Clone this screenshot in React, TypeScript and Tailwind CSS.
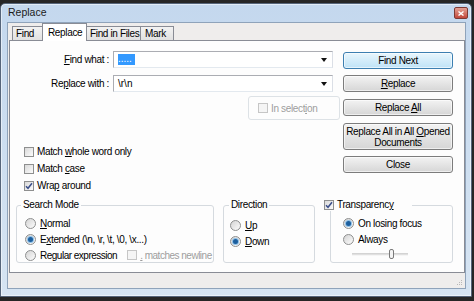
import React from "react";

function Check({ checked = false, disabled = false }: { checked?: boolean; disabled?: boolean }) {
  return (
    <span
      className={
        disabled
          ? "w-[10px] h-[10px] border border-[#c6c6c6] bg-[#f5f5f5] flex items-center justify-center shrink-0"
          : "w-[10px] h-[10px] border border-[#8e8f8f] bg-gradient-to-br from-[#d9d9d9] to-[#fcfcfc] flex items-center justify-center shrink-0"
      }
    >
      {checked && (
        <svg width="8" height="8" viewBox="0 0 8 8">
          <path d="M1 4.2 L3 6.3 L7 1.2" fill="none" stroke="#3b4f8a" strokeWidth="1.5" />
        </svg>
      )}
    </span>
  );
}

function Radio({ checked = false }: { checked?: boolean }) {
  return (
    <span className="w-[11px] h-[11px] rounded-full border border-[#8e8f8f] bg-gradient-to-br from-[#d4d4d4] to-[#fdfdfd] flex items-center justify-center shrink-0">
      {checked && (
        <span className="w-[5px] h-[5px] rounded-full bg-[#1d5f9e] shadow-[0_0_0_1px_#8ec0e8]" />
      )}
    </span>
  );
}

function U({ children }: { children: React.ReactNode }) {
  return <span className="underline underline-offset-[1px]">{children}</span>;
}

function Btn({
  children,
  primary = false,
  tall = false,
  mt,
}: {
  children: React.ReactNode;
  primary?: boolean;
  tall?: boolean;
  mt: string;
}) {
  const base = primary
    ? "border-[#3c7fb1] bg-gradient-to-b from-[#e8f6fd] to-[#bfe3f7]"
    : "border-[#7c7c7c] bg-gradient-to-b from-[#f3f3f3] to-[#d6d6d6]";
  return (
    <div
      className={`${mt} ${tall ? "h-[27px]" : "h-[17px]"} w-full rounded-[3px] border ${base} flex items-center justify-center text-center leading-[11px] shadow-[inset_0_0_0_1px_rgba(255,255,255,0.6)]`}
    >
      {children}
    </div>
  );
}

function Combo({ children }: { children: React.ReactNode }) {
  return (
    <div className="w-[220px] h-[17px] border border-[#abadb3] border-b-[#e3e9ef] border-r-[#dbdfe6] bg-white flex items-center pl-[3px]">
      <div className="flex-1 flex items-center">{children}</div>
      <svg width="6" height="4" viewBox="0 0 6 4" className="mr-[5px]">
        <path d="M0 0 L6 0 L3 4 Z" fill="#111" />
      </svg>
    </div>
  );
}

export default function App() {
  return (
    <div className="w-[474px] h-[301px] bg-[#262626] pt-[3px] pr-[2px] pb-[4px] overflow-hidden whitespace-nowrap font-['Liberation_Sans',Arial,sans-serif] text-[10px] tracking-[-0.35px] text-black">
      <div className="h-full flex flex-col border border-[#56657a] rounded-t-[5px] bg-gradient-to-b from-[#c4d8ee] to-[#d6e4f2] shadow-[inset_0_0_0_1px_rgba(255,255,255,0.5)]">
        {/* Title bar */}
        <div className="h-[18px] flex items-center pl-[7px] pr-[3px]">
          <span className="text-[10.5px] tracking-normal text-[#1b1b1b] flex-1">Replace</span>
          <div className="w-[14px] h-[12px] rounded-[2px] border border-[#7d3a34] bg-gradient-to-b from-[#e3a195] to-[#c2463b] flex items-center justify-center">
            <svg width="6" height="5" viewBox="0 0 6 5">
              <path d="M0.5 0.5 L5.5 4.5 M5.5 0.5 L0.5 4.5" stroke="#fff" strokeWidth="1.4" />
            </svg>
          </div>
        </div>

        {/* Client area */}
        <div className="flex-1 ml-[6px] mr-[5px] mb-[7px] border border-[#8fa3ba] bg-[#efedec] flex flex-col">
          {/* Tabs */}
          <div className="h-[17px] flex items-end pl-[4px]">
            <div className="h-[14px] w-[31px] border border-b-0 border-[#898c95] bg-gradient-to-b from-[#f3f3f3] to-[#e1e1e1] flex items-center pl-[3px]">
              Find
            </div>
            <div className="relative z-10 -mb-[1px] -ml-[1px] h-[18px] w-[45px] border border-b-0 border-[#898c95] bg-white flex items-center pl-[5px]">
              Replace
            </div>
            <div className="h-[14px] w-[55px] -ml-[1px] border border-b-0 border-[#898c95] bg-gradient-to-b from-[#f3f3f3] to-[#e1e1e1] flex items-center pl-[3px]">
              Find in Files
            </div>
            <div className="h-[14px] w-[34px] -ml-[1px] border border-b-0 border-[#898c95] bg-gradient-to-b from-[#f3f3f3] to-[#e1e1e1] flex items-center pl-[4px]">
              Mark
            </div>
          </div>

          {/* Panel */}
          <div className="h-[233px] ml-[1px] border border-[#898c95] bg-[#fdfdfd] flex flex-col">
            <div className="flex">
              {/* Left column */}
              <div className="flex-1 flex flex-col pt-[10px]">
                <div className="h-[17px] flex items-center">
                  <div className="w-[99px] text-right">
                    <U>F</U>ind what :
                  </div>
                  <div className="ml-[4px]">
                    <Combo>
                      <span className="ml-[1px] h-[11px] w-[17px] bg-[#3399ff] text-white leading-[9px] tracking-[0px]">
                        .....
                      </span>
                    </Combo>
                  </div>
                </div>
                <div className="mt-[7px] h-[17px] flex items-center">
                  <div className="w-[99px] text-right">
                    Re<U>p</U>lace with :
                  </div>
                  <div className="ml-[4px]">
                    <Combo>
                      <span className="ml-[1px] tracking-[0px]">\r\n</span>
                    </Combo>
                  </div>
                </div>
                <div className="mt-[4px] self-end mr-[3px] w-[92px] h-[24px] rounded-[3px] border border-[#dde2e6] flex items-center pl-[9px] gap-[3px] text-[#9d9d9d]">
                  <Check disabled />
                  <span>
                    In select<U>i</U>on
                  </span>
                </div>
                <div className="mt-[23px] pl-[14px] flex flex-col">
                  <div className="h-[17px] flex items-center gap-[3px]">
                    <Check />
                    <span>
                      Match <U>w</U>hole word only
                    </span>
                  </div>
                  <div className="h-[17px] flex items-center gap-[3px]">
                    <Check />
                    <span>
                      Match <U>c</U>ase
                    </span>
                  </div>
                  <div className="h-[17px] flex items-center gap-[3px]">
                    <Check checked />
                    <span>
                      Wra<U>p</U> around
                    </span>
                  </div>
                </div>
              </div>

              {/* Right column - buttons */}
              <div className="w-[110px] mr-[11px] flex flex-col">
                <Btn mt="mt-[11px]" primary>
                  Find Next
                </Btn>
                <Btn mt="mt-[6px]">
                  <span>
                    <U>R</U>eplace
                  </span>
                </Btn>
                <Btn mt="mt-[7px]">
                  <span>
                    Replace <U>A</U>ll
                  </span>
                </Btn>
                <Btn mt="mt-[7px]" tall>
                  <span>
                    Replace All in All <U>O</U>pened
                    <br />
                    Documents
                  </span>
                </Btn>
                <Btn mt="mt-[6px]">Close</Btn>
              </div>
            </div>

            {/* Group boxes */}
            <div className="mt-[11px] pl-[6px] flex">
              {/* Search mode */}
              <div className="relative w-[198px] h-[58px] rounded-[3px] border border-[#d5dadf] pt-[9px] pl-[8px]">
                <span className="absolute -top-[7px] left-[4px] bg-[#fdfdfd] px-[2px] leading-[12px]">
                  Search Mode
                </span>
                <div className="h-[16px] flex items-center gap-[4px]">
                  <Radio />
                  <span>
                    <U>N</U>ormal
                  </span>
                </div>
                <div className="h-[16px] flex items-center gap-[4px]">
                  <Radio checked />
                  <span>
                    E<U>x</U>tended (\n, \r, \t, \0, \x...)
                  </span>
                </div>
                <div className="h-[16px] flex items-center gap-[4px] tracking-[-0.5px]">
                  <Radio />
                  <span>Regular expression</span>
                  <span className="ml-[6px] flex items-center gap-[3px] text-[#9d9d9d]">
                    <Check disabled />
                    <span>
                      <U>.</U> matches newline
                    </span>
                  </span>
                </div>
              </div>

              {/* Direction */}
              <div className="relative ml-[9px] w-[92px] h-[58px] rounded-[3px] border border-[#d5dadf] pt-[11px] pl-[6px]">
                <span className="absolute -top-[7px] left-[5px] bg-[#fdfdfd] px-[2px] leading-[12px]">
                  Direction
                </span>
                <div className="h-[16px] flex items-center gap-[4px]">
                  <Radio />
                  <span>
                    <U>U</U>p
                  </span>
                </div>
                <div className="h-[16px] flex items-center gap-[4px]">
                  <Radio checked />
                  <span>
                    <U>D</U>own
                  </span>
                </div>
              </div>

              {/* Transparency */}
              <div className="relative ml-[15px] w-[123px] h-[58px] rounded-[3px] border border-[#d5dadf] pt-[9px] pl-[12px]">
                <span className="absolute -top-[7px] -left-[7px] bg-[#fdfdfd] pr-[18px] leading-[12px] flex items-center gap-[3px]">
                  <Check checked />
                  <span>
                    Transparenc<U>y</U>
                  </span>
                </span>
                <div className="h-[16px] flex items-center gap-[4px]">
                  <Radio checked />
                  <span>On losing focus</span>
                </div>
                <div className="h-[16px] flex items-center gap-[4px]">
                  <Radio />
                  <span>Always</span>
                </div>
                <div className="h-[14px] ml-[9px] w-[56px] flex items-center">
                  <svg width="56" height="12" viewBox="0 0 56 12">
                    <line x1="0" y1="6" x2="56" y2="6" stroke="#a8a8a8" strokeWidth="1" />
                    <line x1="0" y1="7" x2="56" y2="7" stroke="#eeeeee" strokeWidth="1" />
                    <rect x="37.5" y="1.5" width="4" height="9" rx="1.5" fill="#f4f4f4" stroke="#7a7a7a" />
                  </svg>
                </div>
              </div>
            </div>
          </div>
          <div className="flex-1 flex items-end justify-end pr-[2px] pb-[2px]">
            <svg width="8" height="8" viewBox="0 0 8 8">
              <rect x="6" y="2" width="1" height="1" fill="#b8b8b8" />
              <rect x="4" y="4" width="1" height="1" fill="#b8b8b8" />
              <rect x="6" y="4" width="1" height="1" fill="#b8b8b8" />
              <rect x="2" y="6" width="1" height="1" fill="#b8b8b8" />
              <rect x="4" y="6" width="1" height="1" fill="#b8b8b8" />
              <rect x="6" y="6" width="1" height="1" fill="#b8b8b8" />
            </svg>
          </div>
        </div>
      </div>
    </div>
  );
}
